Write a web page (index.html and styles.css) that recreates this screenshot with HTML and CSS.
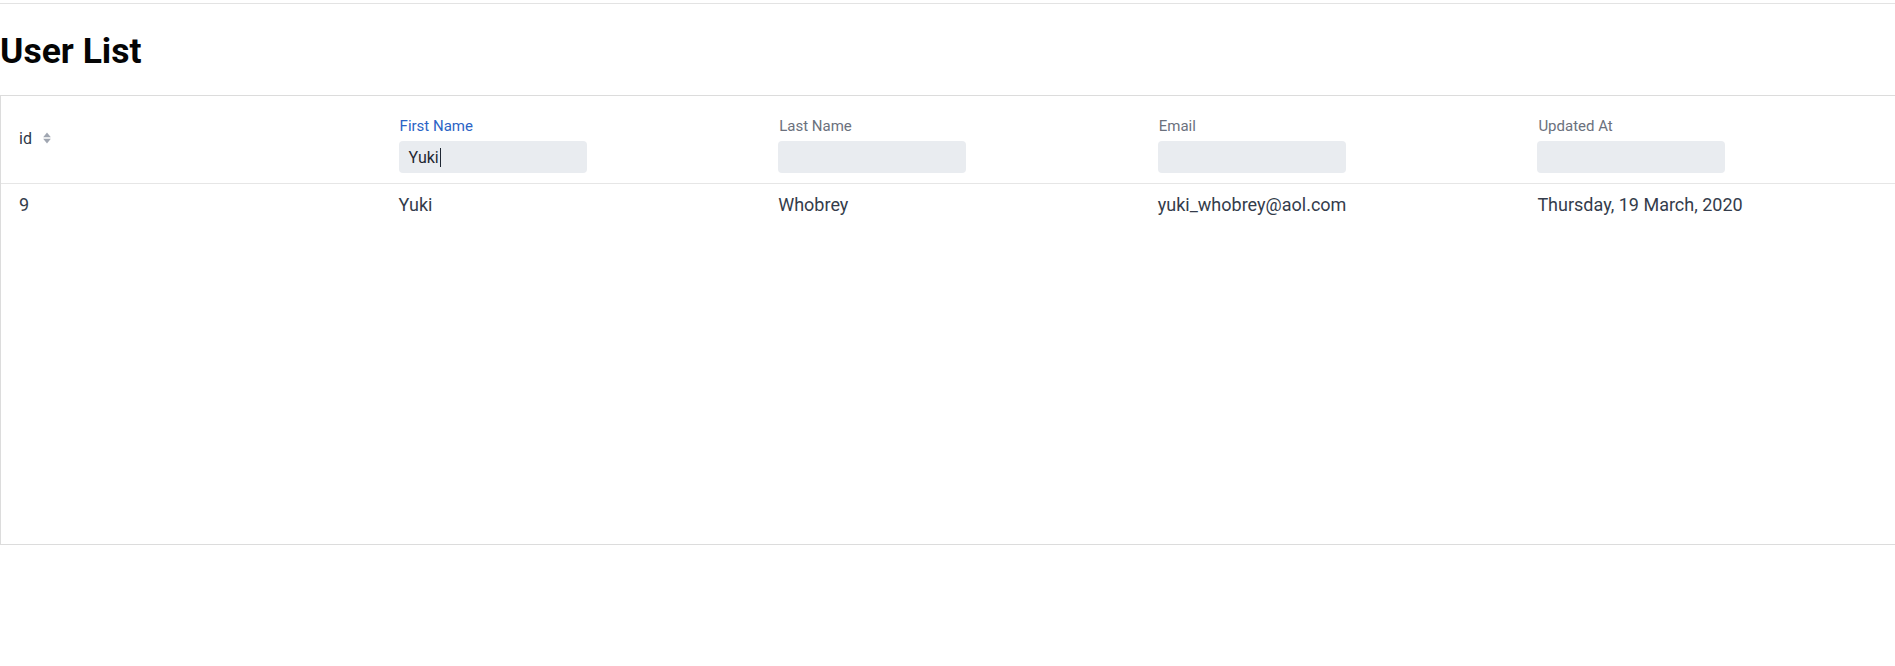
FILE: index.html
```html
<!DOCTYPE html>
<html lang="en">
<head>
<meta charset="utf-8">
<title>User List</title>
<link rel="stylesheet" href="styles.css">
</head>
<body>
<div class="rule"></div>
<h1 class="title">User List</h1>
<div class="table">
  <div class="thead">
    <div class="th th-sort">
      <span>id</span>
      <svg class="sort-icon" width="8" height="12" viewBox="0 0 8 12" aria-hidden="true">
        <path d="M4 0.5 L7.8 5.2 L0.2 5.2 Z" fill="#a0a6b1"/>
        <path d="M4 11.5 L7.8 6.8 L0.2 6.8 Z" fill="#a0a6b1"/>
      </svg>
    </div>
    <div class="th">
      <div class="label label-active">First Name</div>
      <div class="filter"><span>Yuki</span><span class="caret"></span></div>
    </div>
    <div class="th">
      <div class="label">Last Name</div>
      <div class="filter"></div>
    </div>
    <div class="th">
      <div class="label">Email</div>
      <div class="filter"></div>
    </div>
    <div class="th">
      <div class="label">Updated At</div>
      <div class="filter"></div>
    </div>
  </div>
  <div class="trow">
    <div class="td">9</div>
    <div class="td">Yuki</div>
    <div class="td">Whobrey</div>
    <div class="td">yuki_whobrey@aol.com</div>
    <div class="td">Thursday, 19 March, 2020</div>
  </div>
</div>
</body>
</html>
```

FILE: styles.css
```css
html, body {
  margin: 0;
  padding: 0;
  background: #ffffff;
  overflow: hidden;
}

body {
  font-family: Roboto, "Liberation Sans", Arial, sans-serif;
  color: #2d3748;
}

.rule {
  margin-top: 3px;
  border-top: 1px solid #e3e3e3;
}

.title {
  margin: 23px 0 20px 0;
  font-size: 35.5px;
  line-height: 48px;
  font-weight: 700;
  color: #050505;
}

.table {
  width: 1898px;
  height: 448px;
  border: 1px solid #dcdcdc;
  box-sizing: content-box;
}

.thead {
  display: grid;
  grid-template-columns: repeat(5, 379.6px);
  height: 87px;
  border-bottom: 1px solid #e6e6e6;
}

.th {
  padding: 21px 18px 10px 18px;
  display: flex;
  flex-direction: column;
}

.th-sort {
  padding-top: 0;
  padding-bottom: 3px;
  flex-direction: row;
  align-items: center;
  gap: 11px;
  font-size: 16px;
  color: #2d3748;
}

.sort-icon {
  display: block;
}

.label {
  font-size: 15px;
  line-height: 18px;
  color: #6b717d;
  margin-bottom: 6px;
  padding-left: 1px;
}

.label-active {
  color: #2b64c6;
}

.filter {
  width: 188px;
  height: 32px;
  box-sizing: border-box;
  background: #e9ecf0;
  border-radius: 4px;
  padding: 0 10px;
  display: flex;
  align-items: center;
  font-size: 16px;
  color: #1f2733;
}

.caret {
  display: inline-block;
  width: 1px;
  height: 19px;
  background: #1f2733;
  margin-left: 1px;
}

.trow {
  display: grid;
  grid-template-columns: repeat(5, 379.6px);
  padding-top: 7px;
}

.td {
  padding: 0 18px;
  font-size: 18px;
  line-height: 27px;
  color: #343c4b;
}
```
